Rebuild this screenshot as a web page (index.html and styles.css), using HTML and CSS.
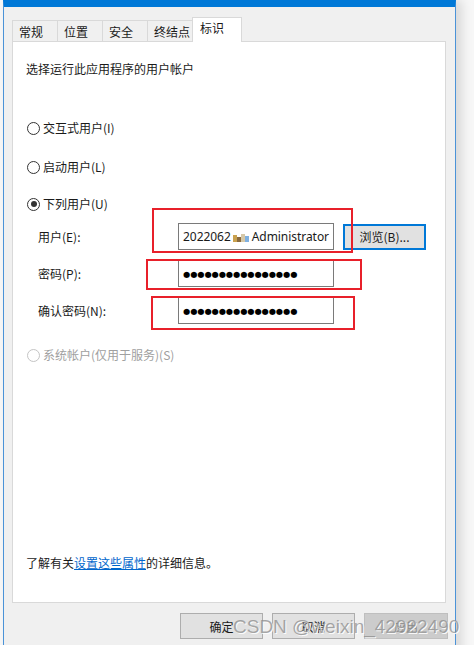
FILE: index.html
```html
<!DOCTYPE html>
<html>
<head>
    <meta charset="UTF-8">
    <title>属性 - 标识</title>
    <link rel="stylesheet" href="styles.css">
</head>
<body>

    <div class="window">
        <div class="tabs">
            <div class="tab">常规</div>
            <div class="tab">位置</div>
            <div class="tab">安全</div>
            <div class="tab">终结点</div>
            <div class="tab active">标识</div>
        </div>

        <div class="panel">
            <p class="intro">选择运行此应用程序的用户帐户</p>

            <div class="radio first"><span class="circle"></span>交互式用户(I)</div>
            <div class="radio second"><span class="circle"></span>启动用户(L)</div>
            <div class="radio third"><span class="circle checked"></span>下列用户(U)</div>

            <div class="fields">
                <div class="field">
                    <span class="field-label">用户(E):</span>
                    <div class="input user">2022062<span class="blur"><i class="px px1"></i><i class="px px2"></i><i class="px px3"></i><i class="px px4"></i></span>Administrator</div>
                    <button class="browse">浏览(B)...</button>
                </div>
                <div class="field">
                    <span class="field-label">密码(P):</span>
                    <div class="input secret">●●●●●●●●●●●●●●●●</div>
                </div>
                <div class="field">
                    <span class="field-label">确认密码(N):</span>
                    <div class="input secret">●●●●●●●●●●●●●●●●</div>
                </div>
            </div>

            <div class="radio disabled"><span class="circle"></span>系统帐户(仅用于服务)(S)</div>

            <p class="info">了解有关<a href="#">设置这些属性</a>的详细信息。</p>
        </div>

        <div class="actions">
            <button class="btn">确定</button>
            <button class="btn">取消</button>
            <button class="btn off">应用</button>
        </div>
    </div>

    <!-- red annotation boxes drawn over the screenshot -->
    <div class="mark mark-user"></div>
    <div class="mark mark-pass"></div>
    <div class="mark mark-confirm"></div>

    <div class="watermark">CSDN @weixin_42922490</div>

</body>
</html>
```

FILE: styles.css
```css
body {
    margin: 0;
    padding: 0;
    background: #f7f7f7;
    font-family: "Noto Sans CJK SC", "Noto Sans", sans-serif;
    font-size: 12px;
    color: #1a1a1a;
    overflow: hidden;
}

.window {
    margin-left: 3px;
    width: 451px;
    height: 660px;
    background: #f0f0f0;
    border: 1px solid #4b93d8;
    border-top: 7px solid #0078d7;
    box-shadow: 6px 0 10px rgba(0, 0, 0, 0.12);
}

/* tab strip */
.tabs {
    display: flex;
    align-items: flex-end;
    height: 24px;
    margin-top: 10px;
    padding-left: 8px;
}

.tab {
    width: 46px;
    height: 21px;
    line-height: 21px;
    padding-left: 6px;
    box-sizing: border-box;
    border: 1px solid #d9d9d9;
    border-bottom: none;
    margin-right: -1px;
    white-space: nowrap;
}

.tab.active {
    position: relative;
    z-index: 1;
    width: 50px;
    height: 25px;
    line-height: 20px;
    padding-left: 7px;
    margin-bottom: -1px;
    background: #ffffff;
}

.panel {
    display: flex;
    flex-direction: column;
    width: 434px;
    height: 562px;
    box-sizing: border-box;
    margin-left: 8px;
    padding: 0 13px 31px 13px;
    background: #ffffff;
    border: 1px solid #d9d9d9;
}

.intro {
    margin: 19px 0 0 0;
    line-height: 16px;
}

.radio {
    display: flex;
    align-items: center;
    height: 16px;
    line-height: 16px;
    padding-left: 1px;
}

.radio.first {
    margin-top: 43px;
}

.radio.second {
    margin-top: 23px;
}

.radio.third {
    margin-top: 21px;
}

.radio.disabled {
    margin-top: 23px;
    color: #a0a0a0;
}

.circle {
    width: 11px;
    height: 11px;
    margin-right: 3px;
    border: 1px solid #333333;
    border-radius: 50%;
    display: flex;
    justify-content: center;
    align-items: center;
    background: #ffffff;
}

.circle.checked::after {
    content: "";
    width: 6px;
    height: 6px;
    border-radius: 50%;
    background: #333333;
}

.radio.disabled .circle {
    border-color: #c4c4c4;
}

/* user / password rows */
.fields {
    display: flex;
    flex-direction: column;
    gap: 10px;
    margin-top: 11px;
}

.field {
    display: flex;
    align-items: center;
    height: 27px;
}

.field-label {
    width: 140px;
    margin-left: 12px;
}

.input {
    width: 156px;
    height: 27px;
    box-sizing: border-box;
    border: 1px solid #7a7a7a;
    background: #ffffff;
    padding-left: 4px;
    display: flex;
    align-items: center;
    overflow: hidden;
    white-space: nowrap;
}

.input.user {
    font-family: "Noto Sans", sans-serif;
    font-size: 12px;
    letter-spacing: -0.05px;
}

.blur {
    display: inline-flex;
    align-items: flex-end;
    width: 16px;
    height: 10px;
    margin: 0 3px 0 2px;
}

.px {
    display: block;
    width: 4px;
    height: 4px;
}

.px1 { background: #c9a14e; height: 7px; }
.px2 { background: #8a6b3e; height: 5px; }
.px3 { background: #d6c8a8; height: 8px; }
.px4 { background: #7fb0e0; height: 6px; }

.input.secret {
    font-family: "DejaVu Sans", sans-serif;
    font-size: 8.2px;
    letter-spacing: 0;
    color: #000000;
}

.browse {
    width: 83px;
    height: 26px;
    margin-left: 9px;
    font-family: inherit;
    font-size: 12px;
    color: #1a1a1a;
    background: #e1e1e1;
    border: 2px solid #0078d7;
    padding: 0;
}

.info {
    margin: auto 0 0 0;
    line-height: 16px;
}

.info a {
    color: #0066cc;
}

/* dialog buttons */
.actions {
    display: flex;
    justify-content: flex-end;
    gap: 9px;
    margin-top: 10px;
    padding-right: 7px;
}

.btn {
    width: 83px;
    height: 26px;
    font-family: inherit;
    font-size: 12px;
    color: #1a1a1a;
    background: #e1e1e1;
    border: 1px solid #adadad;
    padding: 0;
}

.btn.off {
    width: 84px;
    background: #cccccc;
    border-color: #bfbfbf;
    color: #8a8a8a;
}

.mark {
    position: absolute;
    border: 2px solid #e8202a;
    box-sizing: border-box;
}

.mark-user {
    left: 152px;
    top: 208px;
    width: 201px;
    height: 45px;
}

.mark-pass {
    left: 146px;
    top: 259px;
    width: 216px;
    height: 31px;
}

.mark-confirm {
    left: 151px;
    top: 296px;
    width: 204px;
    height: 34px;
}

.watermark {
    position: absolute;
    left: 233px;
    top: 613px;
    font-family: "Liberation Sans", sans-serif;
    font-size: 19px;
    line-height: 28px;
    color: rgba(140, 140, 140, 0.75);
    text-shadow: 1px 1px 0 rgba(255, 255, 255, 0.9);
    white-space: nowrap;
}
```
